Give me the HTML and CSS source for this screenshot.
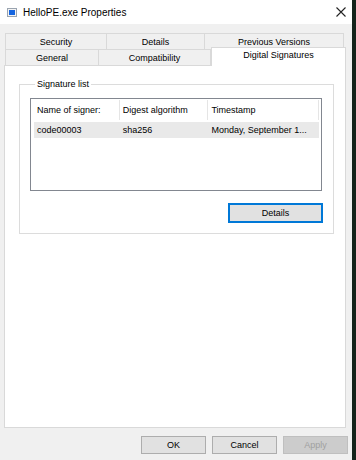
FILE: index.html
```html
<!DOCTYPE html>
<html>
<head>
<meta charset="utf-8">
<link rel="stylesheet" href="styles.css">
</head>
<body>
<div class="screen">
  <div class="window">
    <div class="titlebar">
      <svg class="app-icon" width="10" height="9" viewBox="0 0 10 9">
        <rect x="0.5" y="0.5" width="9" height="8" fill="#f4f4f4" stroke="#9aa4b0"/>
        <rect x="2" y="2" width="6" height="5" fill="#1565e0"/>
      </svg>
      <span class="title">HelloPE.exe Properties</span>
      <svg class="close" width="10" height="10" viewBox="0 0 10 10">
        <path d="M0.5 0.5 L9.5 9.5 M9.5 0.5 L0.5 9.5" stroke="#222" stroke-width="1.1" fill="none"/>
      </svg>
    </div>
    <div class="body">
      <div class="tabs">
        <div class="tab-row">
          <div class="tab w-sec">Security</div>
          <div class="tab w-det">Details</div>
          <div class="tab w-prev">Previous Versions</div>
        </div>
        <div class="tab-row">
          <div class="tab w-gen">General</div>
          <div class="tab w-comp">Compatibility</div>
          <div class="tab tab-active w-dig">Digital Signatures</div>
        </div>
      </div>
      <div class="panel">
        <fieldset class="group">
          <legend>Signature list</legend>
          <div class="list">
            <div class="list-head">
              <div class="col c1">Name of signer:</div>
              <div class="col c2">Digest algorithm</div>
              <div class="col c3">Timestamp</div>
            </div>
            <div class="list-row">
              <div class="cell c1">code00003</div>
              <div class="cell c2">sha256</div>
              <div class="cell c3">Monday, September 1...</div>
            </div>
          </div>
          <div class="group-actions">
            <button class="btn btn-focus">Details</button>
          </div>
        </fieldset>
      </div>
      <div class="footer">
        <button class="btn">OK</button>
        <button class="btn">Cancel</button>
        <button class="btn btn-disabled">Apply</button>
      </div>
    </div>
  </div>
  <div class="edge"></div>
</div>
</body>
</html>
```

FILE: styles.css
```css
html, body {
  margin: 0;
  padding: 0;
}
body {
  width: 356px;
  height: 460px;
  overflow: hidden;
  font-family: "Liberation Sans", Arial, sans-serif;
  font-size: 9px;
  color: #000;
}
.screen {
  display: flex;
  width: 356px;
  height: 460px;
}
.window {
  width: 352px;
  display: flex;
  flex-direction: column;
  background: #f0f0f0;
}
.edge {
  flex: 1;
  background: #15241b;
}
.titlebar {
  height: 24px;
  background: #fff;
  display: flex;
  align-items: center;
  padding-left: 7px;
  padding-right: 6px;
  box-sizing: border-box;
}
.app-icon {
  margin-top: 1px;
}
.title {
  font-size: 10px;
  margin-left: 6px;
  flex: 1;
  color: #000;
}
.body {
  flex: 1;
  display: flex;
  flex-direction: column;
  padding: 9px 4px 0 4px;
}
.tabs {
  display: flex;
  flex-direction: column;
  padding-left: 1px;
}
.tab-row {
  display: flex;
  height: 16px;
}
.tab {
  box-sizing: border-box;
  border: 1px solid #d9d9d9;
  border-bottom: none;
  background: #f0f0f0;
  display: flex;
  align-items: center;
  justify-content: center;
  height: 16px;
  padding-top: 1px;
}
.tab + .tab {
  border-left: none;
}
.w-sec { width: 102px; }
.w-det { width: 98px; }
.w-prev { width: 139px; }
.w-gen { width: 94px; }
.w-comp { width: 112px; }
.w-dig { width: 135px; }
.tab-active {
  background: #fff;
  height: 19px;
  margin-top: -2px;
  margin-bottom: -1px;
  position: relative;
  z-index: 1;
  align-items: flex-start;
  padding-top: 2px;
}
.tab-active + .tab, .tab + .tab-active {
  border-left: 1px solid #d9d9d9;
}
.panel {
  width: 342px;
  height: 363px;
  box-sizing: border-box;
  background: #fff;
  border: 1px solid #d9d9d9;
  padding: 13px 11px 0 14px;
}
.group {
  margin: 0;
  border: 1px solid #dcdcdc;
  padding: 0 11px 10px 10px;
  min-width: 0;
}
.group legend {
  padding: 0 2px;
  margin-left: 5px;
  font-size: 9px;
}
.list {
  margin-top: 9px;
  height: 93px;
  box-sizing: border-box;
  border: 1px solid #828790;
  padding: 1px 2px 0 3px;
}
.list-head {
  display: flex;
  height: 20px;
}
.col {
  box-sizing: border-box;
  display: flex;
  align-items: center;
  padding-left: 3px;
  border-right: 1px solid #e5e5e5;
}
.c1 { width: 86px; }
.c2 { width: 89px; }
.c3 { width: 111px; }
.list-row {
  display: flex;
  height: 16px;
  margin-top: 2px;
  background: #e9e9e9;
}
.cell {
  box-sizing: border-box;
  display: flex;
  align-items: center;
  padding-left: 3px;
  white-space: nowrap;
}
.group-actions {
  display: flex;
  justify-content: flex-end;
  margin-top: 12px;
  margin-right: -1px;
}
.btn {
  font-family: "Liberation Sans", Arial, sans-serif;
  font-size: 9px;
  color: #000;
  background: #e1e1e1;
  border: 1px solid #adadad;
  width: 65px;
  height: 18px;
  padding: 0;
  margin: 0;
  box-sizing: border-box;
}
.btn-focus {
  width: 95px;
  height: 20px;
  border: 2px solid #0078d7;
  background: #e1e1e1;
}
.btn-disabled {
  background: #cccccc;
  border-color: #bfbfbf;
  color: #a0a0a0;
}
.footer {
  display: flex;
  justify-content: flex-end;
  gap: 6px;
  margin-top: 8px;
}
```
